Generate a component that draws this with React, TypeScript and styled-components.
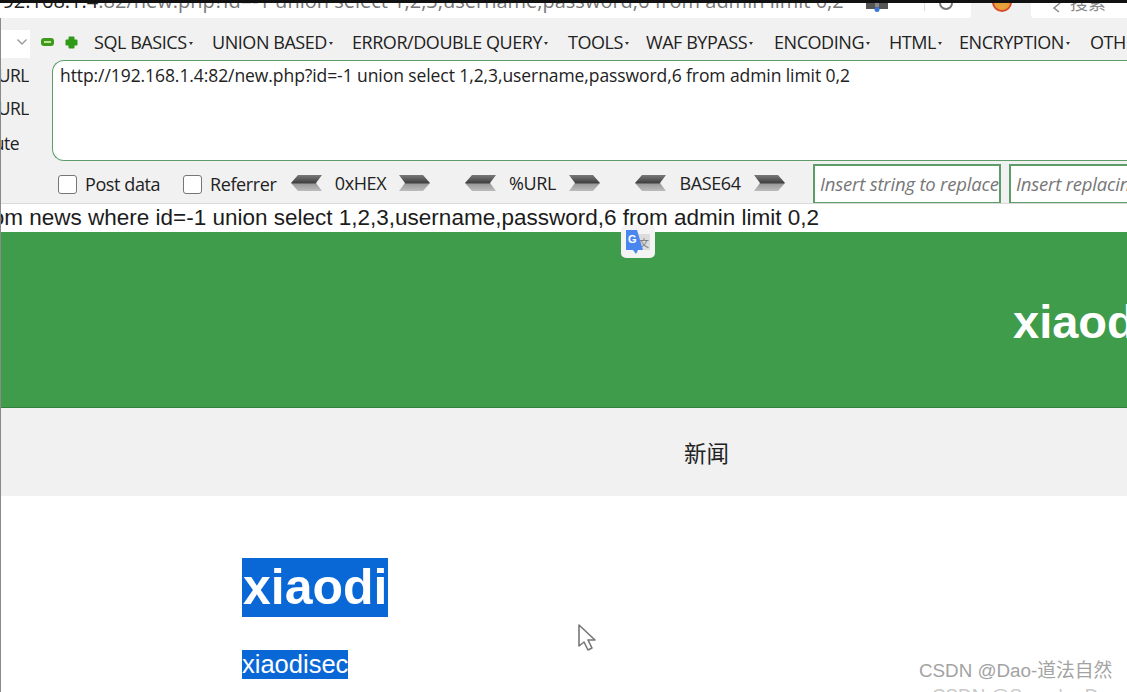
import React from "react";
import styled, { createGlobalStyle } from "styled-components";

const Global = createGlobalStyle`
  html, body { margin: 0; padding: 0; background: #fff; overflow: hidden; }
  #root { width: 1127px; height: 692px; }
`;

const Page = styled.div`
  position: relative;
  width: 1127px;
  height: 692px;
  overflow: hidden;
  display: flex;
  flex-direction: column;
  background: #fff;
  font-family: "Liberation Sans", Arial, sans-serif;
`;
const BlackStrip = styled.div`
  height: 3px;
  background: #111;
  flex: none;
`;
const AddressRow = styled.div`
  height: 15px;
  flex: none;
  display: flex;
  background: #f1f1f1;
  overflow: hidden;
`;
const AddressField = styled.div`
  width: 971px;
  flex: none;
  background: #fff;
  border-bottom-right-radius: 3px;
  overflow: hidden;
  display: flex;
`;
const AddressClip = styled.div`
  width: 866px;
  flex: none;
  overflow: hidden;
`;
const AddressText = styled.div`
  font: 20px/24px "Open Sans", sans-serif;
  color: #777;
  white-space: nowrap;
  margin: -14px 0 0 -9px;
  b { font-weight: 400; color: #222; }
`;
const TabGap = styled.div`
  width: 60px;
  flex: none;
`;
const SearchBox = styled.div`
  flex: 1;
  background: #fff;
  border-bottom-left-radius: 3px;
  color: #888;
  font: 18px/22px "Noto Sans CJK SC", sans-serif;
  overflow: hidden;
  display: flex;
  align-items: flex-start;
  gap: 9px;
  padding-left: 20px;
`;
const SearchText = styled.span`
  margin-top: -12px;
`;
const Body = styled.div`
  flex: 1;
  display: flex;
  flex-direction: column;
  border-left: 1px solid #8a8a8a;
  min-height: 0;
`;
const Toolbar = styled.div`
  height: 42px;
  flex: none;
  box-sizing: border-box;
  padding-top: 6px;
  background: #f1f1f1;
  display: flex;
  align-items: center;
  font: 18px/24px "Open Sans", sans-serif;
  color: #222;
  white-space: nowrap;
  overflow: hidden;
  letter-spacing: -0.45px;
`;
const DropBox = styled.div`
  width: 29px;
  height: 28px;
  margin-top: 4px;
  flex: none;
  background: #fff;
  display: flex;
  align-items: center;
  justify-content: flex-end;
  padding: 0 2px 4px 0;
  box-sizing: border-box;
`;
const RoundIcons = styled.div`
  display: flex;
  align-items: center;
  gap: 11px;
  margin: 0 16px 0 11px;
  flex: none;
`;
const MenuList = styled.div`
  display: flex;
  align-items: center;
`;
const MenuItem = styled.span<{ $w: number }>`
  width: ${(p) => p.$w}px;
  flex: none;
  display: flex;
  align-items: center;
  &::after {
    content: "";
    margin: 2px 0 0 2px;
    border: 2.5px solid transparent;
    border-top: 3px solid #333;
    border-bottom: 0;
  }
`;
const UrlRow = styled.div`
  height: 101px;
  flex: none;
  display: flex;
  background: #f1f1f1;
`;
const Labels = styled.div`
  width: 51px;
  flex: none;
  display: flex;
  flex-direction: column;
  font: 17.5px/24px "Open Sans", sans-serif;
  color: #222;
  letter-spacing: -0.5px;
  padding-top: 3px;
`;
const Label = styled.div<{ $h: number; $w: number }>`
  height: ${(p) => p.$h}px;
  width: ${(p) => p.$w}px;
  display: flex;
  justify-content: flex-end;
  overflow: hidden;
  white-space: nowrap;
`;
const UrlBox = styled.div`
  flex: 1;
  background: #fff;
  border: 1px solid #5e9c6a;
  border-right: 0;
  border-top-width: 1.5px;
  border-radius: 12px 0 0 12px;
  padding: 2px 0 0 7px;
  font: 17.5px/24px "Open Sans", sans-serif;
  letter-spacing: -0.08px;
  color: #222;
  white-space: nowrap;
`;
const OptionRow = styled.div`
  height: 43px;
  flex: none;
  background: #f1f1f1;
  display: flex;
  align-items: center;
  border-bottom: 1px solid #d9d9d9;
  box-sizing: border-box;
  font: 18px/24px "Open Sans", sans-serif;
  letter-spacing: -0.4px;
  color: #222;
  white-space: nowrap;
  padding: 4px 0 0 57px;
  overflow: hidden;
`;
const Check = styled.span`
  width: 17px;
  height: 17px;
  flex: none;
  background: #fff;
  border: 1px solid #767676;
  border-radius: 3px;
  margin-right: 8px;
`;
const CheckLabel = styled.span<{ $w: number }>`
  width: ${(p) => p.$w}px;
  flex: none;
`;
const Encoder = styled.div<{ $w: number; $ml: number }>`
  width: ${(p) => p.$w}px;
  margin-left: ${(p) => p.$ml}px;
  flex: none;
  display: flex;
  align-items: center;
  justify-content: space-between;
  margin-top: -3px;
`;
const Spacer = styled.span`
  width: 27px;
  flex: none;
`;
const Replace = styled.div<{ $w: number }>`
  width: ${(p) => p.$w}px;
  height: 40px;
  flex: none;
  box-sizing: border-box;
  background: #fff;
  border: 2px solid #5e9c6a;
  color: #777;
  font: italic 18.5px/36px "Open Sans", sans-serif;
  letter-spacing: -0.2px;
  padding-left: 5px;
  padding-right: 1px;
  overflow: hidden;
  margin-right: 8px;
`;
const QueryRow = styled.div`
  height: 28px;
  flex: none;
  background: #fff;
  overflow: hidden;
  white-space: nowrap;
  font-size: 22.5px;
  line-height: 27px;
  color: #1c1c1c;
`;
const QueryText = styled.span`
  margin-left: -23px;
`;
const Hero = styled.header`
  height: 176px;
  flex: none;
  background: #3f9c4a;
  border-bottom: 1px solid #33803e;
  box-sizing: border-box;
  display: flex;
  align-items: center;
  overflow: hidden;
`;
const HeroTitle = styled.h1`
  margin: 4px 0 0 1012px;
  font-size: 47px;
  line-height: 52px;
  font-weight: 700;
  color: #fff;
  white-space: nowrap;
`;
const Nav = styled.nav`
  height: 88px;
  flex: none;
  background: #f1f1f1;
  display: flex;
  align-items: center;
  padding-left: 683px;
  font: 22.5px/30px "Noto Sans CJK SC", sans-serif;
  color: #222;
`;
const Content = styled.main`
  flex: 1;
  padding: 62px 0 0 241px;
  display: flex;
  flex-direction: column;
  align-items: flex-start;
`;
const Selected = styled.span`
  background: #0a68d6;
  color: #fff;
`;
const Title = styled(Selected)`
  font-size: 50px;
  font-weight: 700;
  line-height: 59px;
  padding: 0 1px;
`;
const Sub = styled(Selected)`
  font-size: 25.5px;
  line-height: 29px;
  margin-top: 33px;
`;
const FloatIcon = styled.div`
  position: absolute;
  left: 621px;
  top: 225px;
  width: 34px;
  height: 33px;
  background: #f4f4f4;
  border-radius: 5px;
  display: flex;
  align-items: center;
  justify-content: center;
`;
const Pointer = styled.svg`
  position: absolute;
  left: 577px;
  top: 624px;
`;
const Watermark = styled.div`
  position: absolute;
  left: 919px;
  top: 659px;
  font: 18.8px/24px "Liberation Sans", "Noto Sans CJK SC", sans-serif;
  color: #a3a3a3;
  white-space: nowrap;
`;
const WatermarkGhost = styled(Watermark)`
  left: 932px;
  top: 684px;
  color: #c8c8c8;
`;

const Chevron = ({ dir }: { dir: "l" | "r" }) => (
  <svg width="33" height="18" viewBox="0 0 33 18">
    <defs>
      <linearGradient id={`chev-${dir}`} x1="0" y1="0" x2="0" y2="1">
        <stop offset="0" stopColor="#7a7a7a" />
        <stop offset="0.5" stopColor="#3f3f3f" />
        <stop offset="0.56" stopColor="#9a9a9a" />
        <stop offset="1" stopColor="#bcbcbc" />
      </linearGradient>
    </defs>
    <path
      d={dir === "l" ? "M1 9 8 1h24l-6 8 6 8H8z" : "M1 1h24l7 8-7 8H1l6-8z"}
      fill={`url(#chev-${dir})`}
    />
  </svg>
);

const MENU: [string, number][] = [
  ["SQL BASICS", 118],
  ["UNION BASED", 140],
  ["ERROR/DOUBLE QUERY", 216],
  ["TOOLS", 78],
  ["WAF BYPASS", 128],
  ["ENCODING", 115],
  ["HTML", 70],
  ["ENCRYPTION", 131],
];

export default function App() {
  return (
    <Page>
      <Global />
      <BlackStrip />
      <AddressRow>
        <AddressField>
          <AddressClip>
            <AddressText>
              <b>192.168.1.4</b>:82/new.php?id=-1 union select 1,2,3,username,password,6 from admin limit 0,2
            </AddressText>
          </AddressClip>
          <svg width="105" height="15" viewBox="0 0 105 15">
            <rect x="0" y="0" width="22" height="6" fill="#555" />
            <path d="M9 0h4v4H9z" fill="#888" />
            <circle cx="11" cy="6.5" r="2.5" fill="#3b78d8" />
            <rect x="58" y="0" width="1" height="8" fill="#ddd" />
            <path d="M74 0a6 6 0 0 0 12 0" fill="none" stroke="#777" strokeWidth="2" />
          </svg>
        </AddressField>
        <TabGap>
          <svg width="60" height="15" viewBox="0 0 60 15">
            <circle cx="31" cy="-1" r="9" fill="#e8a13a" stroke="#d9492c" strokeWidth="2" />
          </svg>
        </TabGap>
        <SearchBox>
          <svg width="10" height="10" viewBox="0 0 10 10">
            <path d="M9 0 3 5l5 4" fill="none" stroke="#888" strokeWidth="1.5" />
          </svg>
          <SearchText>搜索</SearchText>
        </SearchBox>
      </AddressRow>
      <Body>
        <Toolbar>
          <DropBox>
            <svg width="12" height="8" viewBox="0 0 12 8">
              <path d="M1.5 1.5 6 6l4.5-4.5" fill="none" stroke="#999" strokeWidth="1.4" />
            </svg>
          </DropBox>
          <RoundIcons>
            <svg width="13" height="8" viewBox="0 0 13 8">
              <rect x="0" y="0" width="13" height="8" rx="3" fill="#3d9a1e" />
              <rect x="3" y="3" width="7" height="2" fill="#bce58a" />
            </svg>
            <svg width="13" height="13" viewBox="0 0 13 13">
              <path d="M4.5 1.5h4v3h3v4h-3v3h-4v-3h-3v-4h3z" fill="#2f9a17" stroke="#2f9a17" strokeWidth="2" strokeLinejoin="round" />
            </svg>
          </RoundIcons>
          <MenuList>
            {MENU.map(([t, w]) => (
              <MenuItem key={t} $w={w}>{t}</MenuItem>
            ))}
            <span>OTHER</span>
          </MenuList>
        </Toolbar>
        <UrlRow>
          <Labels>
            <Label $h={33} $w={28}>URL</Label>
            <Label $h={35} $w={28}>URL</Label>
            <Label $h={24} $w={18}>ute</Label>
          </Labels>
          <UrlBox>http://192.168.1.4:82/new.php?id=-1 union select 1,2,3,username,password,6 from admin limit 0,2</UrlBox>
        </UrlRow>
        <OptionRow>
          <Check />
          <CheckLabel $w={98}>Post data</CheckLabel>
          <Check />
          <CheckLabel $w={80}>Referrer</CheckLabel>
          <Encoder $w={141} $ml={0}><Chevron dir="l" />0xHEX<Chevron dir="r" /></Encoder>
          <Encoder $w={137} $ml={33}><Chevron dir="l" />%URL<Chevron dir="r" /></Encoder>
          <Encoder $w={152} $ml={33}><Chevron dir="l" />BASE64<Chevron dir="r" /></Encoder>
          <Spacer />
          <Replace $w={188}>Insert string to replace</Replace>
          <Replace $w={140}>Insert replacing string</Replace>
        </OptionRow>
        <QueryRow>
          <QueryText>from news where id=-1 union select 1,2,3,username,password,6 from admin limit 0,2</QueryText>
        </QueryRow>
        <Hero>
          <HeroTitle>xiaodi</HeroTitle>
        </Hero>
        <Nav>新闻</Nav>
        <Content>
          <Title>xiaodi</Title>
          <Sub>xiaodisec</Sub>
        </Content>
      </Body>
      <FloatIcon>
        <svg width="26" height="26" viewBox="0 0 26 26">
          <rect x="12" y="5" width="13" height="16" fill="#dcdcdc" />
          <text x="14" y="18" fontSize="10" fill="#777" fontFamily="Noto Sans CJK SC">文</text>
          <path d="M1 1h11l6 20h-5l-2 4-3-4H1z" fill="#4a86f0" />
          <text x="3" y="14" fontSize="11" fontWeight="700" fill="#fff" fontFamily="Liberation Sans">G</text>
        </svg>
      </FloatIcon>
      <Pointer width="20" height="28" viewBox="0 0 20 28">
        <path d="M2 1v21l5-4 4 8 4-2-4-8h7z" fill="#fff" stroke="#777" strokeWidth="1.6" strokeLinejoin="round" />
      </Pointer>
      <Watermark>CSDN @Dao-道法自然</Watermark>
      <WatermarkGhost>CSDN @Sampler Dao</WatermarkGhost>
    </Page>
  );
}
